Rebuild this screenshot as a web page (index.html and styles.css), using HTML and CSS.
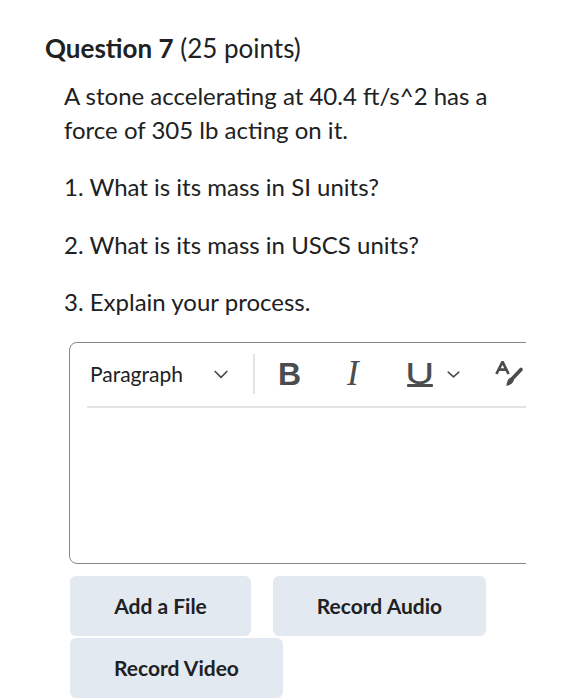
FILE: index.html
```html
<!DOCTYPE html>
<html>
<head>
<meta charset="utf-8">
<link rel="stylesheet" href="styles.css">
</head>
<body>
<div class="page">
  <h2 class="title"><span class="qnum">Question 7</span> (25 points)</h2>
  <div class="question">
    <p class="para">A stone accelerating at 40.4 ft/s^2 has a force of 305 lb acting on it.</p>
    <p class="para">1. What is its mass in SI units?</p>
    <p class="para">2. What is its mass in USCS units?</p>
    <p class="para last">3. Explain your process.</p>
  </div>
  <div class="editor-clip">
    <div class="editor">
      <div class="toolbar">
        <span class="block-label">Paragraph</span>
        <svg class="chev" width="14" height="9" viewBox="0 0 14 9"><path d="M1.2 1.5 L7 7.3 L12.8 1.5" fill="none" stroke="#4a4c4e" stroke-width="1.7" stroke-linecap="round" stroke-linejoin="round"/></svg>
        <div class="sep"></div>
        <span class="tb-btn tb-bold">B</span>
        <span class="tb-btn tb-italic">I</span>
        <span class="tb-under"><span class="u-glyph">U</span><span class="u-line"></span></span>
        <svg class="chev small" width="13" height="7" viewBox="0 0 13 7"><path d="M1.2 1.2 L6.5 5.8 L11.8 1.2" fill="none" stroke="#4a4c4e" stroke-width="1.6" stroke-linecap="round" stroke-linejoin="round"/></svg>
        <svg class="format-icon" width="28" height="26" viewBox="0 0 28 26">
          <path d="M1.4 13 L7.5 0.8 L13.6 13 M3.6 8.6 L11.4 8.6" fill="none" stroke="#4a4c4e" stroke-width="2.7" stroke-linejoin="round"/>
          <path d="M26 8.5 L17.5 17.5" fill="none" stroke="#4a4c4e" stroke-width="3.6" stroke-linecap="round"/>
          <path d="M16.5 16.2 C13.3 17.3 11.8 20 11.3 24.8 C15.6 24.2 18.2 22 19 18.8 Z" fill="#4a4c4e"/>
        </svg>
      </div>
      <div class="content"></div>
    </div>
  </div>
  <div class="actions">
    <button class="action">Add a File</button>
    <button class="action">Record Audio</button>
    <button class="action">Record Video</button>
  </div>
</div>
</body>
</html>
```

FILE: styles.css
```css
html, body {
  margin: 0;
  padding: 0;
  background: #ffffff;
}
body {
  font-family: Lato, "Noto Sans", sans-serif;
  color: #202122;
}
.page {
  padding: 32px 0 0 45px;
}
.title {
  margin: 0;
  font-size: 26px;
  line-height: 32px;
  font-weight: 400;
  color: #202122;
}
.qnum {
  font-weight: 700;
}
.question {
  padding: 15px 0 0 19px;
  width: 462px;
}
.para {
  margin: 0 0 24px 0;
  font-size: 24px;
  line-height: 33.6px;
}
.para.last {
  margin-bottom: 0;
}
.editor-clip {
  margin: 23px 0 0 24px;
  width: 457px;
  overflow: hidden;
}
.editor {
  width: 520px;
  height: 222px;
  border: 1px solid #868686;
  border-radius: 8px;
  box-sizing: border-box;
}
.toolbar {
  display: flex;
  align-items: center;
  height: 65px;
  margin-left: 17px;
  border-bottom: 2px solid #e3e4e5;
  box-sizing: border-box;
}
.block-label {
  font-size: 21px;
  line-height: 26px;
  color: #202122;
  width: 124px;
  margin-left: 3px;
}
.chev {
  display: block;
  flex: none;
}
.sep {
  width: 2px;
  height: 40px;
  background: #e3e4e5;
  margin-left: 25px;
}
.tb-btn {
  color: #4a4c4e;
  display: block;
  height: 30px;
  line-height: 30px;
}
.tb-bold {
  font-family: "Liberation Sans", sans-serif;
  font-weight: 700;
  font-size: 32px;
  margin-left: 23px;
}
.tb-italic {
  font-family: "Liberation Serif", serif;
  font-style: italic;
  font-size: 35px;
  margin-left: 46px;
}
.tb-under {
  display: flex;
  flex-direction: column;
  align-items: center;
  width: 26px;
  margin-left: 48px;
  gap: 1px;
}
.u-glyph {
  display: block;
  font-family: Lato, sans-serif;
  font-size: 29px;
  line-height: 21px;
  height: 21px;
  color: #4a4c4e;
  transform: scaleX(1.38);
}
.u-line {
  display: block;
  width: 26px;
  height: 3px;
  border-radius: 1px;
  background: #4a4c4e;
}
.chev.small {
  margin-left: 14px;
}
.format-icon {
  display: block;
  margin-left: 35px;
  flex: none;
}
.actions {
  display: grid;
  grid-template-columns: 181px 213px;
  column-gap: 22px;
  row-gap: 2px;
  margin: 12px 0 0 25px;
}
.action {
  height: 60px;
  border: none;
  border-radius: 6px;
  background: #e3e9f1;
  font-family: Lato, sans-serif;
  font-weight: 700;
  font-size: 21px;
  color: #202122;
  padding: 0;
}
.action:nth-child(3) {
  width: 213px;
}
```
